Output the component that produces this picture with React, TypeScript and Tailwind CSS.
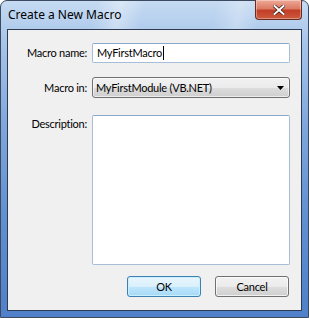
import React from 'react';

export default function App() {
  return (
    <div className="w-[309px] h-[318px] bg-white" style={{ fontFamily: '"Noto Sans", "Open Sans", sans-serif' }}>
      {/* Window frame */}
      <div className="w-full h-full flex flex-col rounded-t-[7px] border border-[#3b4a5e] px-[6px] pb-[6px] bg-[linear-gradient(180deg,#c6dbf2_0%,#a9c6ea_12%,#7ea6dc_40%,#5f8fd0_70%,#4f80c9_100%)]">
        {/* Title bar */}
        <div className="relative h-[28px] flex items-start justify-between bg-[linear-gradient(100deg,transparent_30%,rgba(255,255,255,0.35)_38%,transparent_46%,transparent_70%,rgba(255,255,255,0.25)_78%,transparent_85%)]">
          <span className="pl-[1px] pt-[6px] text-[12px] leading-[16px] text-black">Create a New Macro</span>
          <button className="-mt-px w-[47px] h-[20px] flex items-center justify-center rounded-b-[4px] border border-[#6b2a20] border-t-0 bg-[linear-gradient(180deg,#eeaa9a_0%,#dc7a63_45%,#c23f27_55%,#cc5a3e_100%)] shadow-[inset_0_0_0_1px_rgba(255,255,255,0.35)]">
            <svg width="12" height="10" viewBox="0 0 12 10">
              <path d="M1.5 1 L10.5 9 M10.5 1 L1.5 9" stroke="#3a1a14" strokeWidth="3.4" strokeLinecap="square" />
              <path d="M1.5 1 L10.5 9 M10.5 1 L1.5 9" stroke="#ffffff" strokeWidth="2" strokeLinecap="square" />
            </svg>
          </button>
        </div>

        {/* Client area */}
        <div
          className="flex-1 flex flex-col border border-[#2c3b52] bg-[#f0f0f0] pt-[13px] pb-[13px] pr-[11px] text-[11px] tracking-[-0.25px] text-black"
          style={{ fontFamily: 'Lato, "Noto Sans", sans-serif' }}
        >
          <div className="flex items-center h-[20px]">
            <label className="w-[80px] text-right pr-px leading-[16px]">Macro name:</label>
            <div className="ml-[4px] flex-1 h-[20px] flex items-center rounded-[2px] border border-[#a7bdd8] border-t-[#8fa9cc] bg-white pl-[4px]">
              <span className="leading-[16px]">MyFirstMacro</span>
              <span className="w-px h-[14px] bg-black ml-px" />
            </div>
          </div>

          <div className="flex items-center h-[21px] mt-[14px]">
            <label className="w-[80px] text-right pr-px leading-[16px]">Macro in:</label>
            <div className="ml-[4px] flex-1 h-[21px] flex items-center justify-between rounded-[3px] border border-[#707070] bg-[linear-gradient(180deg,#f2f2f2_0%,#ebebeb_50%,#dddddd_51%,#cfcfcf_100%)] pl-[3px] pr-[5px] shadow-[inset_0_0_0_1px_rgba(255,255,255,0.6)]">
              <span className="leading-[16px]">MyFirstModule (VB.NET)</span>
              <svg width="7" height="4" viewBox="0 0 7 4">
                <path d="M0 0 H7 L3.5 4 Z" fill="#000" />
              </svg>
            </div>
          </div>

          <div className="flex items-start h-[150px] mt-[17px]">
            <label className="w-[80px] text-right pr-px leading-[16px] pt-[1px]">Description:</label>
            <div className="ml-[4px] flex-1 h-[150px] rounded-[2px] border border-[#a7bdd8] border-t-[#8fa9cc] bg-white" />
          </div>

          <div className="flex justify-end gap-[14px] mt-[11px] pr-px">
            <button className="w-[74px] h-[21px] rounded-[3px] border border-[#3c7fb1] bg-[linear-gradient(180deg,#eaf6fd_0%,#d9f0fc_50%,#bee6fd_51%,#a7d9f5_100%)] shadow-[inset_0_0_0_1px_#c9f0ff] leading-[16px]">
              OK
            </button>
            <button className="w-[74px] h-[21px] rounded-[3px] border border-[#707070] bg-[linear-gradient(180deg,#f2f2f2_0%,#ebebeb_50%,#dddddd_51%,#cfcfcf_100%)] shadow-[inset_0_0_0_1px_rgba(255,255,255,0.7)] leading-[16px]">
              Cancel
            </button>
          </div>
        </div>
      </div>
    </div>
  );
}
